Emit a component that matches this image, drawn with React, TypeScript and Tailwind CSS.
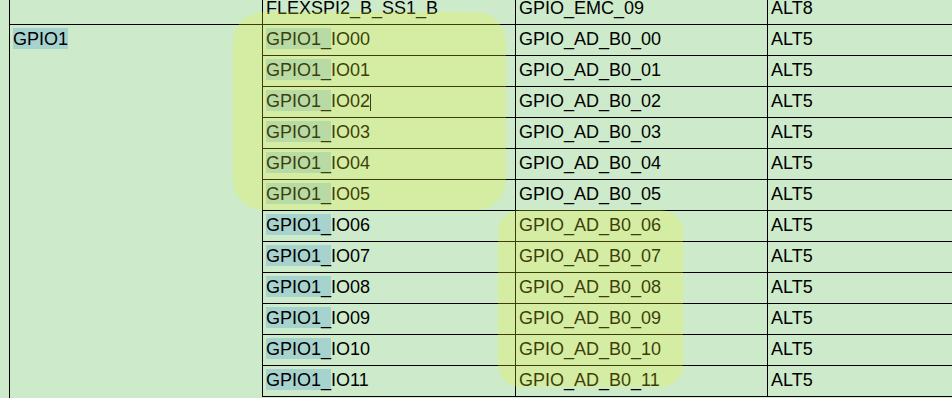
import React from "react";

const ids = ["00", "01", "02", "03", "04", "05", "06", "07", "08", "09", "10", "11"];

function Cell({ w, children }: { w: string; children?: React.ReactNode }) {
  return (
    <div className={`${w} shrink-0 whitespace-nowrap border-l border-black px-[3px] pt-[4px]`}>
      {children}
    </div>
  );
}

export default function App() {
  return (
    <div className="relative h-[398px] w-[952px] overflow-hidden bg-[#cdebcb] font-['Liberation_Sans',Arial,sans-serif] text-[18px] leading-[21px] text-black">
      <div className="-mt-[6px] ml-[9px] flex">
        {/* signal group column */}
        <div className="flex w-[253px] shrink-0 flex-col border-l border-black">
          <div className="h-[31px] border-b border-black" />
          <div className="h-[420px] px-[3px] pt-[4px]">
            <span className="bg-[#a7d3cf] pt-[1px]">GPIO1</span>
          </div>
        </div>

        <div className="flex flex-col">
          <div className="flex h-[31px] border-b border-black">
            <Cell w="w-[253px]">FLEXSPI2_B_SS1_B</Cell>
            <Cell w="w-[252px]">GPIO_EMC_09</Cell>
            <Cell w="w-[253px]">ALT8</Cell>
          </div>
          {ids.map((id) => (
            <div key={id} className="flex h-[31px] border-b border-black">
              <Cell w="w-[253px]">
                <span className="bg-[#a7d3cf] pt-[1px]">GPIO1_</span>IO{id}
                {id === "02" && (
                  <span className="inline-block h-[17px] w-px bg-black align-[-4px]" />
                )}
              </Cell>
              <Cell w="w-[252px]">GPIO_AD_B0_{id}</Cell>
              <Cell w="w-[253px]">ALT5</Cell>
            </div>
          ))}
        </div>
      </div>

      {/* marker highlights */}
      <div className="pointer-events-none absolute left-[233px] top-[12px] h-[198px] w-[273px] rounded-[30px] bg-[rgba(237,243,43,0.25)]" />
      <div className="pointer-events-none absolute left-[498px] top-[210px] h-[177px] w-[185px] rounded-[22px] bg-[rgba(237,243,43,0.25)]" />
    </div>
  );
}
